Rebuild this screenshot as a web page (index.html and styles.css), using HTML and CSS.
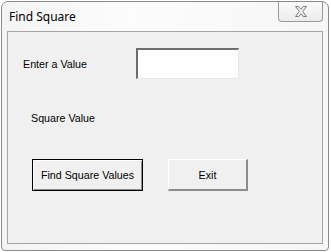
FILE: index.html
```html
<!DOCTYPE html>
<html lang="en">
<head>
    <meta charset="UTF-8">
    <title>Find Square</title>
    <link rel="stylesheet" href="styles.css">
</head>
<body>
    <div class="window">
        <div class="titlebar">
            <span class="title">Find Square</span>
            <div class="close-btn">
                <svg width="14" height="11" viewBox="0 0 14 11">
                    <path d="M1.5 0.5 H4.8 L7 3.3 L9.2 0.5 H12.5 L8.8 5.5 L12.5 10.5 H9.2 L7 7.7 L4.8 10.5 H1.5 L5.2 5.5 Z"
                          fill="#ececec" stroke="#808080" stroke-width="1" stroke-linejoin="round"/>
                </svg>
            </div>
        </div>
        <div class="client">
            <div class="row">
                <span class="label">Enter a Value</span>
                <input type="text" class="textbox">
            </div>
            <div class="result">Square Value</div>
            <div class="buttons">
                <button class="btn btn-default">Find Square Values</button>
                <button class="btn">Exit</button>
            </div>
        </div>
    </div>
</body>
</html>
```

FILE: styles.css
```css
body {
    margin: 0;
    background: #ffffff;
    font-family: "Liberation Sans", Arial, sans-serif;
    font-size: 10.7px;
    color: #000;
}
.window {
    margin: 1px 0 0 1px;
    width: 326px;
    height: 248px;
    border: 1px solid #8a8a8a;
    border-radius: 7px 7px 4px 4px;
    background: linear-gradient(to right, #f4f4f4, #fcfcfc 40%, #f6f6f6);
    display: flex;
    flex-direction: column;
}
.titlebar {
    height: 29px;
    display: flex;
    justify-content: space-between;
    align-items: flex-start;
}
.title {
    font-family: "Noto Sans", sans-serif;
    font-size: 12px;
    padding: 6px 0 0 7px;
}
.close-btn {
    width: 43px;
    height: 19px;
    margin-right: 5px;
    border: 1px solid #9a9a9a;
    border-top: none;
    border-radius: 0 0 4px 4px;
    background: linear-gradient(#fafafa, #ececec);
    display: flex;
    align-items: center;
    justify-content: center;
}
.client {
    flex: 1;
    margin: 0 5px 6px 5px;
    border: 1px solid #a5a5a5;
    background: #f0f0f0;
    padding: 16px 0 0 15px;
}
.row {
    display: flex;
    align-items: center;
}
.label {
    width: 113px;
}
.textbox {
    box-sizing: border-box;
    width: 103px;
    height: 31px;
    margin: 0;
    padding: 0;
    background: #fff;
    border-style: solid;
    border-width: 2px 1px 1px 2px;
    border-color: #6e6e6e #e8e8e8 #e8e8e8 #6e6e6e;
}
.result {
    margin: 33px 0 0 8px;
    line-height: 13px;
}
.buttons {
    margin: 34px 0 0 9px;
    display: flex;
    gap: 25px;
}
.btn {
    box-sizing: border-box;
    width: 80px;
    height: 32px;
    font-family: "Liberation Sans", Arial, sans-serif;
    font-size: 10.7px;
    color: #000;
    background: #f0f0f0;
    border-style: solid;
    border-width: 1px 2px 2px 1px;
    border-color: #ffffff #8c8c8c #8c8c8c #ffffff;
    padding: 0;
}
.btn-default {
    width: 111px;
    border: 1px solid #000;
    box-shadow: inset 1px 1px 0 #ffffff, inset -1px -1px 0 #8c8c8c;
}
```
